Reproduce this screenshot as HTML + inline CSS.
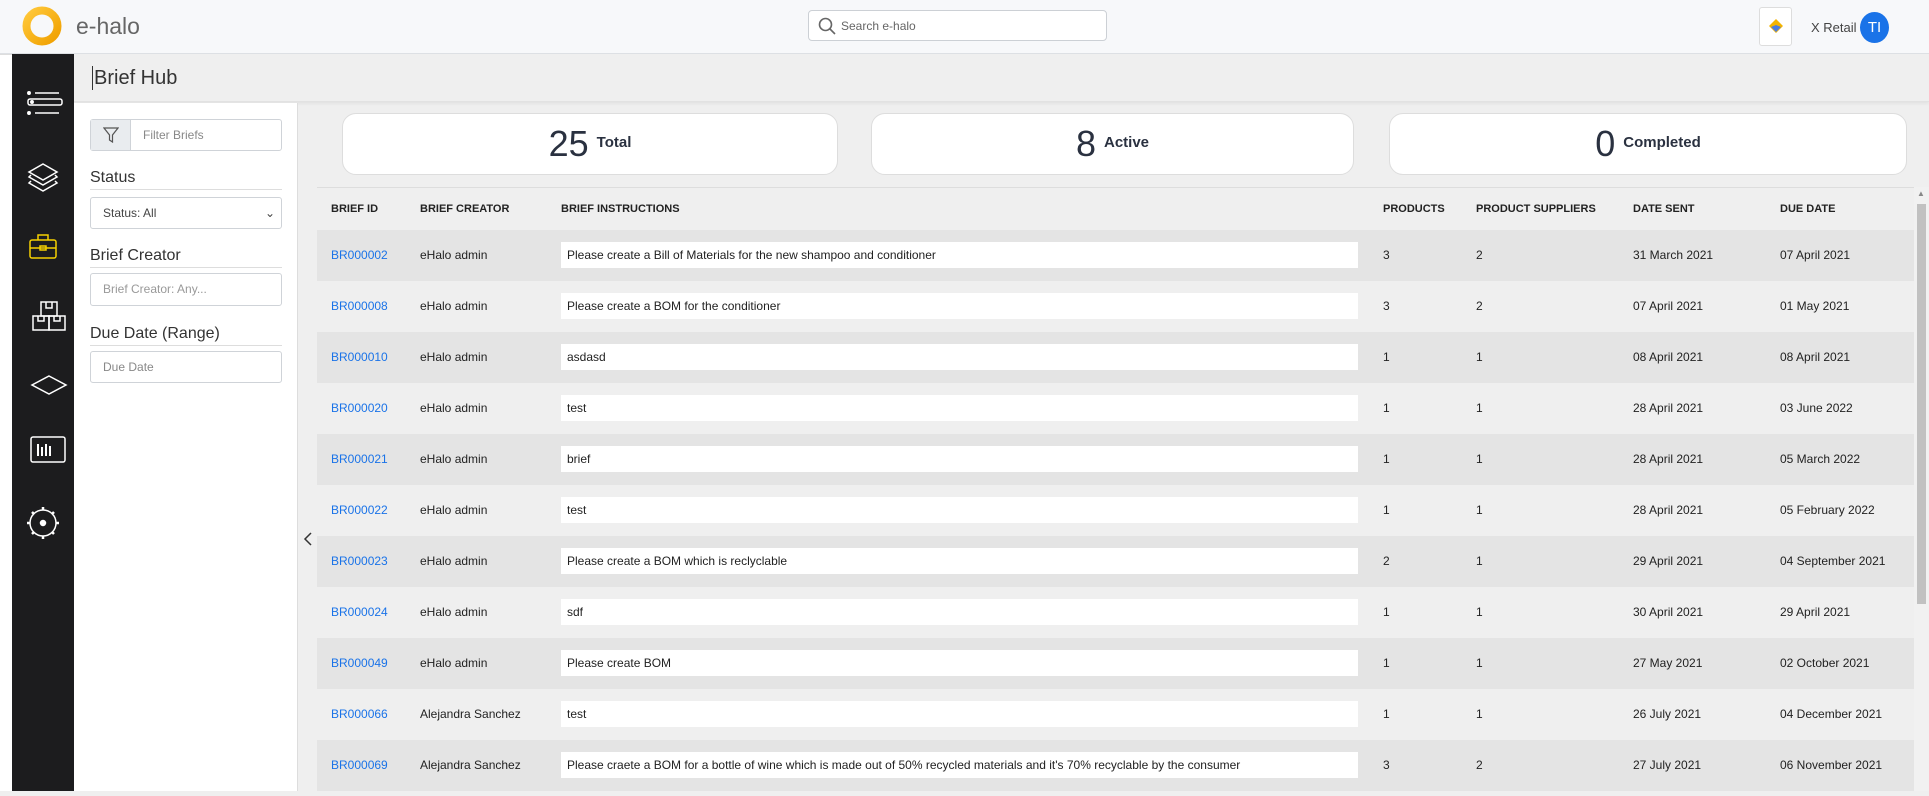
<!DOCTYPE html>
<html><head><meta charset="utf-8"><style>
*{box-sizing:border-box;margin:0;padding:0}
body{width:1929px;height:791px;overflow:hidden;background:#efefef;font-family:"Liberation Sans",sans-serif;position:relative;color:#222}
.abs{position:absolute}
#top{left:0;top:0;width:1929px;height:54px;background:#f7f8fa;border-bottom:1px solid #dde0e4}
#strip{left:0;top:54px;width:12px;height:737px;background:#fff;border-top:1px solid #ddd}
#side{left:12px;top:54px;width:62px;height:737px;background:#1c1c1e}
#hub{left:74px;top:54px;width:1855px;height:48px;background:#efefef;border-bottom:1px solid #e2e2e2;box-shadow:0 2px 3px rgba(0,0,0,.05)}
#hub span{position:absolute;left:18px;top:12px;font-size:20px;color:#333;border-left:1px solid #333;padding-left:1px;line-height:24px}
#filt{left:74px;top:103px;width:224px;height:688px;background:#fff;border-right:1px solid #ddd}
.inp{position:absolute;left:16px;width:192px;background:#fff;border:1px solid #cfd3d8;border-radius:3px;font-size:12px;color:#888;padding-left:12px}
.lbl{position:absolute;left:16px;width:192px;font-size:16px;color:#333;border-bottom:1px solid #ddd;padding-bottom:2px}
.card{position:absolute;top:113px;height:62px;background:#fff;border:1px solid #ddd;border-radius:14px;text-align:center;line-height:60px;white-space:nowrap}
.card b{font-weight:normal;font-size:36px;color:#2a3140;vertical-align:middle}
.card i{font-style:normal;font-weight:bold;font-size:15px;color:#2a3140;vertical-align:middle;margin-left:8px;position:relative;top:-1px}
table{position:absolute;left:317px;top:187px;width:1597px;border-collapse:collapse;font-size:12px}
th{height:42px;text-align:left;font-size:11px;color:#222;background:#efefef;border-top:1px solid #ddd;font-weight:bold}
td{height:51px;color:#222}
tr:nth-child(even) td{background:#e4e4e4}
tr:nth-child(odd) td{background:#efefef}
td:first-child,th:first-child{padding-left:14px}
a{color:#1a73e8;text-decoration:none}
.ib{background:#fff;height:26px;line-height:26px;padding-left:6px;width:797px}
</style></head><body>
<div id="top" class="abs">
 <svg class="abs" style="left:20px;top:4px" width="46" height="46"><defs><linearGradient id="g" x1="0" y1="0" x2="1" y2="1"><stop offset="0" stop-color="#ffc83a"/><stop offset="1" stop-color="#f0a000"/></linearGradient></defs><circle cx="22" cy="22" r="15.5" fill="none" stroke="url(#g)" stroke-width="8"/></svg>
 <div class="abs" style="left:76px;top:13px;font-size:23px;color:#666">e-halo</div>
 <div class="abs" style="left:808px;top:10px;width:299px;height:31px;background:#fff;border:1px solid #ccd0d5;border-radius:4px">
  <svg class="abs" style="left:9px;top:6px" width="18" height="18"><circle cx="7.5" cy="7.5" r="6" fill="none" stroke="#666" stroke-width="1.6"/><path d="M12 12L17 17" stroke="#666" stroke-width="1.6"/></svg>
  <span class="abs" style="left:32px;top:8px;font-size:12px;color:#666">Search e-halo</span></div>
 <div class="abs" style="left:1759px;top:7px;width:33px;height:39px;background:#fff;border:1px solid #ddd;border-radius:3px">
  <svg class="abs" style="left:8px;top:10px" width="16" height="16"><path d="M8 1L15 8L8 15L1 8Z" fill="#f4b400"/><path d="M3 9L8 14L13 9L8 7Z" fill="#4a7ce0"/></svg></div>
 <div class="abs" style="left:1811px;top:20px;font-size:13px;color:#444">X Retail</div>
 <div class="abs" style="left:1860px;top:12px;width:29px;height:31px;border-radius:50%;background:#1a73e8;color:#fff;font-size:15px;text-align:center;line-height:31px">TI</div>
</div>
<div id="strip" class="abs"></div>
<div id="side" class="abs">
 <svg width="62" height="737" fill="none" stroke="#fff" stroke-width="1.5">
  <g transform="translate(0,-54)">
   <circle cx="17" cy="93" r="1.2" fill="#fff"/><path d="M23 93H47"/>
   <rect x="16" y="99" width="34" height="6" rx="2"/><circle cx="20" cy="102" r="1.2" fill="#fff"/>
   <circle cx="17" cy="113" r="1.2" fill="#fff"/><path d="M23 113H47"/>
   <path d="M31 164L45 172L31 180L17 172Z"/><path d="M19 175L17 177L31 185L45 177L43 175"/><path d="M19 181L17 183L31 191L45 183L43 181"/>
   <g stroke="#f5d000"><rect x="18" y="240" width="26" height="18" rx="2"/><path d="M26 240V235H36V240M18 248H44"/><rect x="28" y="246" width="6" height="4"/></g>
   <rect x="21" y="316" width="16" height="14"/><rect x="37" y="316" width="16" height="14"/><rect x="29" y="302" width="16" height="14"/><path d="M34 302V308H40V302M26 316V321H32V316M42 316V321H48V316"/>
   <path d="M37 376L54 385L37 394L20 385Z"/>
   <rect x="19" y="437" width="34" height="25" rx="2"/>
   <path d="M26 444V456M30 447V456M34 444V456M38 446V456" stroke-width="2"/>
   <circle cx="31" cy="523" r="13"/><circle cx="31" cy="523" r="2.5" fill="#fff"/>
   <path d="M31 507V510M31 536V539M15 523H18M44 523H47M20 512L22 514M40 532L42 534M42 512L40 514M22 532L20 534" stroke-width="2.5"/>
  </g></svg>
</div>
<div id="hub" class="abs"><span>Brief Hub</span></div>
<div id="filt" class="abs">
 <div class="inp" style="top:16px;height:32px;padding-left:0">
  <div class="abs" style="left:0;top:0;width:40px;height:30px;background:#e9ecef;border-right:1px solid #cfd3d8"><svg class="abs" style="left:12px;top:7px" width="16" height="16" fill="none" stroke="#555" stroke-width="1.2"><path d="M1 1H15L9.5 8V15L6.5 13V8Z"/></svg></div>
  <span class="abs" style="left:52px;top:8px">Filter Briefs</span></div>
 <div class="lbl" style="top:66px">Status</div>
 <div class="inp" style="top:94px;height:32px;color:#444;line-height:30px">Status: All<span class="abs" style="right:6px;top:0;font-size:12px">&#x2304;</span></div>
 <div class="lbl" style="top:144px">Brief Creator</div>
 <div class="inp" style="top:170px;height:33px;line-height:31px;color:#999">Brief Creator: Any...</div>
 <div class="lbl" style="top:222px">Due Date (Range)</div>
 <div class="inp" style="top:248px;height:32px;line-height:30px;color:#888">Due Date</div>
</div>
<svg class="abs" style="left:302px;top:531px" width="12" height="16"><path d="M9 2L3 8L9 14" fill="none" stroke="#333" stroke-width="1.5"/></svg>
<div class="card" style="left:342px;width:496px"><b>25</b><i>Total</i></div>
<div class="card" style="left:871px;width:483px"><b>8</b><i>Active</i></div>
<div class="card" style="left:1389px;width:518px"><b>0</b><i>Completed</i></div>
<div class="abs" style="left:1914px;top:187px;width:15px;height:604px;background:#f1f1f1"><div class="abs" style="left:3px;top:17px;width:9px;height:400px;background:#c1c1c1"></div><div class="abs" style="left:3px;top:2px;font-size:8px;color:#888">▲</div></div>
<table>
<tr><th style="width:103px">BRIEF ID</th><th style="width:141px">BRIEF CREATOR</th><th style="width:822px">BRIEF INSTRUCTIONS</th><th style="width:93px">PRODUCTS</th><th style="width:157px">PRODUCT SUPPLIERS</th><th style="width:147px">DATE SENT</th><th>DUE DATE</th></tr>
<tr><td><a>BR000002</a></td><td>eHalo admin</td><td><div class="ib">Please create a Bill of Materials for the new shampoo and conditioner</div></td><td>3</td><td>2</td><td>31 March 2021</td><td>07 April 2021</td></tr>
<tr><td><a>BR000008</a></td><td>eHalo admin</td><td><div class="ib">Please create a BOM for the conditioner</div></td><td>3</td><td>2</td><td>07 April 2021</td><td>01 May 2021</td></tr>
<tr><td><a>BR000010</a></td><td>eHalo admin</td><td><div class="ib">asdasd</div></td><td>1</td><td>1</td><td>08 April 2021</td><td>08 April 2021</td></tr>
<tr><td><a>BR000020</a></td><td>eHalo admin</td><td><div class="ib">test</div></td><td>1</td><td>1</td><td>28 April 2021</td><td>03 June 2022</td></tr>
<tr><td><a>BR000021</a></td><td>eHalo admin</td><td><div class="ib">brief</div></td><td>1</td><td>1</td><td>28 April 2021</td><td>05 March 2022</td></tr>
<tr><td><a>BR000022</a></td><td>eHalo admin</td><td><div class="ib">test</div></td><td>1</td><td>1</td><td>28 April 2021</td><td>05 February 2022</td></tr>
<tr><td><a>BR000023</a></td><td>eHalo admin</td><td><div class="ib">Please create a BOM which is reclyclable</div></td><td>2</td><td>1</td><td>29 April 2021</td><td>04 September 2021</td></tr>
<tr><td><a>BR000024</a></td><td>eHalo admin</td><td><div class="ib">sdf</div></td><td>1</td><td>1</td><td>30 April 2021</td><td>29 April 2021</td></tr>
<tr><td><a>BR000049</a></td><td>eHalo admin</td><td><div class="ib">Please create BOM</div></td><td>1</td><td>1</td><td>27 May 2021</td><td>02 October 2021</td></tr>
<tr><td><a>BR000066</a></td><td>Alejandra Sanchez</td><td><div class="ib">test</div></td><td>1</td><td>1</td><td>26 July 2021</td><td>04 December 2021</td></tr>
<tr><td><a>BR000069</a></td><td>Alejandra Sanchez</td><td><div class="ib">Please craete a BOM for a bottle of wine which is made out of 50% recycled materials and it's 70% recyclable by the consumer</div></td><td>3</td><td>2</td><td>27 July 2021</td><td>06 November 2021</td></tr>
</table>
</body></html>
